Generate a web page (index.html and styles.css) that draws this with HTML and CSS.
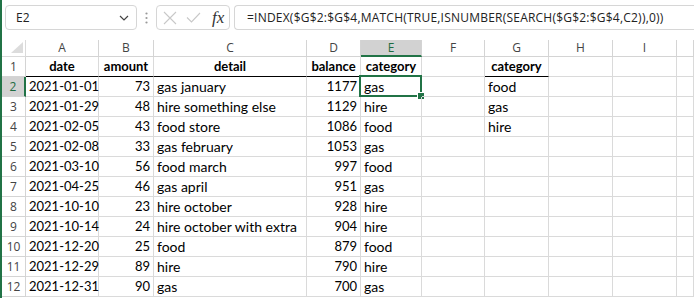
FILE: index.html
```html
<!DOCTYPE html>
<html lang="en">
<head>
    <meta charset="UTF-8">
    <title>Sheet1</title>
    <link rel="stylesheet" href="styles.css">
</head>
<body>
    <div class="app">
        <div class="toolbar">
            <div class="namebox">
                <span>E2</span>
                <svg class="chevron" width="10" height="6" viewBox="0 0 10 6"><path d="M1 1l4 4 4-4" fill="none" stroke="#444" stroke-width="1.2"/></svg>
            </div>
            <svg class="grip" width="3" height="12" viewBox="0 0 3 12"><circle cx="1.5" cy="1.5" r="1.1" fill="#999"/><circle cx="1.5" cy="6" r="1.1" fill="#999"/><circle cx="1.5" cy="10.5" r="1.1" fill="#999"/></svg>
            <div class="fxbox">
                <svg width="14" height="14" viewBox="0 0 14 14"><path d="M1 1l12 12M13 1L1 13" stroke="#c8c8c8" stroke-width="1.1" fill="none"/></svg>
                <svg width="15" height="11" viewBox="0 0 15 11"><path d="M1 5.5l4.5 4.5L14 1" stroke="#c8c8c8" stroke-width="1.1" fill="none"/></svg>
                <span class="fx">fx</span>
            </div>
            <div class="formula">=INDEX($G$2:$G$4,MATCH(TRUE,ISNUMBER(SEARCH($G$2:$G$4,C2)),0))</div>
        </div>
        <div class="sheet"></div>
    </div>

    <script>
        // sheet data
        const letters = ['A', 'B', 'C', 'D', 'E', 'F', 'G', 'H', 'I', ''];
        const rows = [
            ['date', 'amount', 'detail', 'balance', 'category', '', 'category'],
            ['2021-01-01', 73, 'gas january', 1177, 'gas', '', 'food'],
            ['2021-01-29', 48, 'hire something else', 1129, 'hire', '', 'gas'],
            ['2021-02-05', 43, 'food store', 1086, 'food', '', 'hire'],
            ['2021-02-08', 33, 'gas february', 1053, 'gas'],
            ['2021-03-10', 56, 'food march', 997, 'food'],
            ['2021-04-25', 46, 'gas april', 951, 'gas'],
            ['2021-10-10', 23, 'hire october', 928, 'hire'],
            ['2021-10-14', 24, 'hire october with extra', 904, 'hire'],
            ['2021-12-20', 25, 'food', 879, 'food'],
            ['2021-12-29', 89, 'hire', 790, 'hire'],
            ['2021-12-31', 90, 'gas', 700, 'gas']
        ];
        const align = ['num', 'num', 'text', 'num', 'text', '', 'text', '', '', ''];

        function cell(text, cls) {
            return `<div class="cell ${cls}">${text}</div>`;
        }

        let html = '<div class="cell corner"><svg width="12" height="11" viewBox="0 0 12 11"><path d="M12 0v11H0z" fill="#dcdcdc"/></svg></div>';
        letters.forEach(l => {
            html += cell(l, 'colhead' + (l === 'E' ? ' active' : ''));
        });

        rows.forEach((row, r) => {
            html += cell(r + 1, 'rowhead' + (r === 1 ? ' active' : ''));
            letters.forEach((l, c) => {
                const v = row[c] === undefined ? '' : row[c];
                let cls = align[c];
                if (r === 0 && (v !== '' || c < 5)) cls = 'title';
                if (r === 1 && c === 4) cls += ' selected';
                html += cell(v, cls);
            });
        });

        document.querySelector('.sheet').innerHTML = html;
    </script>
</body>
</html>
```

FILE: styles.css
```css
* {
    margin: 0;
    padding: 0;
    box-sizing: border-box;
}

body {
    width: 694px;
    height: 298px;
    overflow: hidden;
    background: #fff;
    font-family: 'Lato', 'Liberation Sans', sans-serif;
    color: #000;
}

.app {
    border-left: 2px solid #217346;
    height: 298px;
    overflow: hidden;
}

/* formula bar */
.toolbar {
    height: 40px;
    display: flex;
    align-items: flex-start;
    padding: 5px 0 0 3px;
    white-space: nowrap;
    font-family: 'Open Sans', 'Noto Sans', sans-serif;
    font-size: 12px;
    color: #222;
}

.namebox {
    width: 132px;
    height: 25px;
    border: 1px solid #d6d6d6;
    border-radius: 4px;
    display: flex;
    align-items: center;
    justify-content: space-between;
    padding: 0 7px 0 10px;
}

.grip {
    margin: 7px 8px 0 8px;
}

.fxbox {
    width: 74px;
    height: 25px;
    border: 1px solid #d6d6d6;
    border-radius: 4px;
    display: flex;
    align-items: center;
    gap: 9px;
    padding-left: 6px;
}

.fx {
    font-family: 'Liberation Serif', serif;
    font-style: italic;
    font-size: 17px;
    color: #333;
    margin-left: 2px;
}

.formula {
    flex: 1;
    height: 25px;
    margin-left: 4px;
    border: 1px solid #d6d6d6;
    border-right: none;
    border-radius: 4px 0 0 4px;
    padding: 3px 0 0 12px;
    letter-spacing: 0.22px;
    overflow: hidden;
}

/* grid */
.sheet {
    display: grid;
    grid-template-columns: 24px 73px 55px 153px 54px 61px 63px 64px 64px 64px 1fr;
    grid-template-rows: 17px;
    grid-auto-rows: 20px;
    font-size: 13px;
}

.cell {
    border-right: 1px solid #dadada;
    border-bottom: 1px solid #dadada;
    padding: 0 3px;
    line-height: 19px;
    white-space: nowrap;
    position: relative;
}

.num {
    text-align: right;
}

.text {
    font-size: 14px;
}

.title {
    font-weight: bold;
    text-align: center;
    border-bottom-color: #000;
}

.corner {
    display: flex;
    align-items: flex-end;
    justify-content: flex-end;
    padding: 0 2px 3px 0;
}

.colhead,
.rowhead {
    font-family: 'Open Sans', 'Noto Sans', sans-serif;
    font-size: 12px;
    color: #444;
    text-align: center;
    border-color: #d4d4d4;
}

.colhead {
    line-height: 16px;
}

.colhead.active {
    background: #d2d2d2;
    color: #1e6c41;
    border-bottom: 2px solid #217346;
}

.rowhead.active {
    background: #d2d2d2;
    color: #1e6c41;
    border-right: 2px solid #217346;
}

.selected::before {
    content: '';
    position: absolute;
    top: -2px;
    left: -2px;
    right: -1px;
    bottom: -1px;
    border: 2px solid #217346;
}

.selected::after {
    content: '';
    position: absolute;
    right: -4px;
    bottom: -4px;
    width: 6px;
    height: 6px;
    background: #217346;
    border: 1px solid #fff;
}
```
